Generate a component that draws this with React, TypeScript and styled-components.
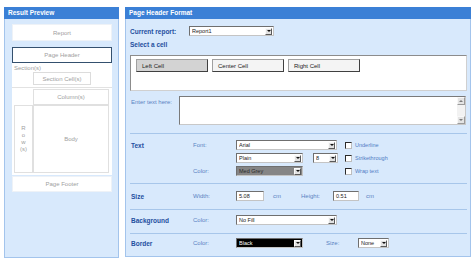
import React from 'react';
import styled, { createGlobalStyle } from 'styled-components';

const GlobalStyle = createGlobalStyle`
  html, body {
    margin: 0;
    padding: 0;
    background: #ffffff;
  }
  body {
    font-family: "Liberation Sans", Arial, sans-serif;
    font-size: 6.5px;
  }
`;

const Page = styled.div`
  display: flex;
  align-items: flex-start;
  gap: 6px;
  width: 474px;
  height: 260px;
  box-sizing: border-box;
  padding: 7px 3px 0 4px;
`;

const Panel = styled.div<{ $width: number; $height: number }>`
  display: flex;
  flex-direction: column;
  width: ${({ $width }) => $width}px;
  height: ${({ $height }) => $height}px;
  box-sizing: border-box;
  background: #d8e9fc;
  border: 1px solid #a3c4ec;
  border-top: none;
`;

const PanelHeader = styled.div`
  height: 12px;
  line-height: 12px;
  padding-left: 4px;
  background: #3b80d6;
  color: #ffffff;
  font-weight: bold;
  font-size: 6.5px;
  margin: 0 -1px;
`;

/* ---------- left: preview ---------- */

const PreviewBody = styled.div`
  display: flex;
  flex-direction: column;
  padding: 5px 6px 0 7px;
`;

const PreviewBox = styled.div<{ $height: number; $selected?: boolean }>`
  height: ${({ $height }) => $height}px;
  box-sizing: border-box;
  display: flex;
  align-items: center;
  justify-content: center;
  background: #ffffff;
  color: #a0a0a0;
  font-size: 6px;
  border: ${({ $selected }) => ($selected ? '1.5px solid #34506e' : '1px solid #eef2f7')};
`;

const Gap = styled.div<{ $h: number }>`
  height: ${({ $h }) => $h}px;
`;

const SectionArea = styled.div`
  background: #ffffff;
  display: flex;
  flex-direction: column;
  height: 112px;
`;

const SectionLabel = styled.div`
  color: #a0a0a0;
  font-size: 6px;
  padding: 2px 0 0 2px;
  height: 7px;
  line-height: 7px;
`;

const SectionCell = styled.div`
  margin-left: 21px;
  width: 58px;
  height: 14px;
  box-sizing: border-box;
  border: 1px solid #dcdcdc;
  display: flex;
  align-items: center;
  justify-content: center;
  color: #a0a0a0;
  font-size: 6px;
`;

const PreviewGrid = styled.div`
  margin-top: 2px;
  border-top: 1px solid #e2e2e2;
  padding: 1px 3px 2px 2px;
  display: grid;
  grid-template-columns: 19px 76px;
  grid-template-rows: 16px 68px;
`;

const GridCell = styled.div<{ $stack?: boolean }>`
  border: 1px solid #e0e0e0;
  display: flex;
  flex-direction: ${({ $stack }) => ($stack ? 'column' : 'row')};
  align-items: center;
  justify-content: center;
  color: #a0a0a0;
  font-size: 6px;
  line-height: 7px;
  text-align: center;
`;

const EmptyCell = styled.div``;

const FooterBox = styled(PreviewBox)`
  margin-top: 1px;
`;

/* ---------- right: format form ---------- */

const FormBody = styled.div`
  display: flex;
  flex-direction: column;
  padding: 7px 3px 0 4px;
`;

const InlineRow = styled.div`
  display: flex;
  align-items: center;
  height: 10px;
`;

const BoldLabel = styled.div<{ $width?: number }>`
  color: #1f4f9f;
  font-weight: bold;
  font-size: 6.5px;
  width: ${({ $width }) => ($width ? `${$width}px` : 'auto')};
  flex-shrink: 0;
`;

const SectionTitle = styled(BoldLabel)`
  height: 10px;
  line-height: 10px;
  margin-top: 1px;
`;

const PlainLabel = styled.div<{ $width?: number }>`
  color: #5a83c3;
  font-size: 6px;
  width: ${({ $width }) => ($width ? `${$width}px` : 'auto')};
  flex-shrink: 0;
`;

const CellLabel = styled(BoldLabel)`
  margin-top: 5px;
  height: 8px;
  line-height: 8px;
`;

const CellPicker = styled.div`
  margin-top: 6px;
  height: 36px;
  box-sizing: border-box;
  background: #ffffff;
  border: 1px solid #8c8c8c;
  border-right-color: #d0d0d0;
  border-bottom-color: #d0d0d0;
  display: flex;
  align-items: flex-start;
  gap: 4px;
  padding: 3px 0 0 5px;
`;

const CellButton = styled.div<{ $active?: boolean }>`
  width: 72px;
  height: 13px;
  box-sizing: border-box;
  display: flex;
  align-items: center;
  padding-left: 5px;
  font-size: 6px;
  color: #222222;
  background: ${({ $active }) => ($active ? '#d3d3d3' : '#f4f4f4')};
  border: 1px solid #a0a0a0;
  border-right-color: #404040;
  border-bottom-color: #404040;
`;

const TextEntryRow = styled.div`
  display: flex;
  align-items: flex-start;
  margin-top: 5px;
`;

const EntryLabel = styled(PlainLabel)`
  width: 48px;
  padding: 3px 0 0 1px;
`;

const TextArea = styled.div`
  flex: 1;
  height: 29px;
  box-sizing: border-box;
  background: #ffffff;
  border: 1px solid #7a7a7a;
  border-right-color: #c8c8c8;
  border-bottom-color: #c8c8c8;
  display: flex;
  justify-content: flex-end;
  margin-right: 1px;
`;

const ScrollBar = styled.div`
  width: 8px;
  display: flex;
  flex-direction: column;
  justify-content: space-between;
  background: #f2f2f2;
`;

const ScrollArrow = styled.div<{ $up?: boolean }>`
  width: 8px;
  height: 8px;
  box-sizing: border-box;
  background: #e4e4e4;
  border: 1px solid #f8f8f8;
  border-right-color: #9a9a9a;
  border-bottom-color: #9a9a9a;
  display: flex;
  align-items: center;
  justify-content: center;
  &::after {
    content: '';
    border-left: 2px solid transparent;
    border-right: 2px solid transparent;
    ${({ $up }) => ($up ? 'border-bottom: 2px solid #7a7a7a;' : 'border-top: 2px solid #7a7a7a;')}
  }
`;

const Section = styled.div<{ $top: number; $gap: number }>`
  border-top: 1px solid #a7c6ea;
  margin-top: ${({ $gap }) => $gap}px;
  padding: ${({ $top }) => $top}px 0 7px 1px;
  display: flex;
  align-items: flex-start;
`;

const SectionRows = styled.div`
  display: flex;
  flex-direction: column;
  gap: 3px;
`;

const FieldRow = styled.div`
  display: flex;
  align-items: center;
  height: 10px;
`;

const SelectBox = styled.div<{ $width: number; $bg?: string; $fg?: string }>`
  width: ${({ $width }) => $width}px;
  height: 10px;
  box-sizing: border-box;
  flex-shrink: 0;
  display: flex;
  align-items: center;
  padding: 0 1px 0 2px;
  background: ${({ $bg }) => $bg ?? '#ffffff'};
  color: ${({ $fg }) => $fg ?? '#1a1a1a'};
  border: 1px solid #6f6f6f;
  border-right-color: #c4c4c4;
  border-bottom-color: #c4c4c4;
  font-size: 5.5px;
`;

const SelectText = styled.span`
  flex: 1;
  white-space: nowrap;
  overflow: hidden;
`;

const DropButton = styled.div`
  width: 7px;
  height: 7px;
  box-sizing: border-box;
  background: #e2e2e2;
  border: 1px solid #fafafa;
  border-right-color: #5a5a5a;
  border-bottom-color: #5a5a5a;
  display: flex;
  align-items: center;
  justify-content: center;
  &::after {
    content: '';
    border-left: 2px solid transparent;
    border-right: 2px solid transparent;
    border-top: 2px solid #111111;
  }
`;

const TextInput = styled.div<{ $width: number }>`
  width: ${({ $width }) => $width}px;
  height: 10px;
  box-sizing: border-box;
  flex-shrink: 0;
  display: flex;
  align-items: center;
  padding-left: 2px;
  background: #ffffff;
  border: 1px solid #6f6f6f;
  border-right-color: #c4c4c4;
  border-bottom-color: #c4c4c4;
  font-size: 5.5px;
  color: #1a1a1a;
`;

const Spacer = styled.div<{ $w: number }>`
  width: ${({ $w }) => $w}px;
  flex-shrink: 0;
`;

const CheckItem = styled.div`
  display: flex;
  align-items: center;
  gap: 3px;
  color: #4f7cc4;
  font-size: 5.5px;
`;

const CheckBox = styled.div`
  width: 7px;
  height: 7px;
  box-sizing: border-box;
  background: #ffffff;
  border: 1px solid #2a2a2a;
  border-right-color: #bdbdbd;
  border-bottom-color: #bdbdbd;
`;

const Select: React.FC<{ width: number; value: string; bg?: string; fg?: string }> = ({
  width,
  value,
  bg,
  fg,
}) => (
  <SelectBox $width={width} $bg={bg} $fg={fg}>
    <SelectText>{value}</SelectText>
    <DropButton />
  </SelectBox>
);

const Check: React.FC<{ label: string }> = ({ label }) => (
  <CheckItem>
    <CheckBox />
    {label}
  </CheckItem>
);

const App: React.FC = () => {
  return (
    <>
      <GlobalStyle />
      <Page>
        <Panel $width={115} $height={251}>
          <PanelHeader>Result Preview</PanelHeader>
          <PreviewBody>
            <PreviewBox $height={17}>Report</PreviewBox>
            <Gap $h={6} />
            <PreviewBox $height={16} $selected>
              Page Header
            </PreviewBox>
            <SectionArea>
              <SectionLabel>Section(s)</SectionLabel>
              <SectionCell>Section Cell(s)</SectionCell>
              <PreviewGrid>
                <EmptyCell />
                <GridCell>Column(s)</GridCell>
                <GridCell $stack>
                  <span>R</span>
                  <span>o</span>
                  <span>w</span>
                  <span>(s)</span>
                </GridCell>
                <GridCell>Body</GridCell>
              </PreviewGrid>
            </SectionArea>
            <FooterBox $height={16}>Page Footer</FooterBox>
          </PreviewBody>
        </Panel>

        <Panel $width={346} $height={250}>
          <PanelHeader>Page Header Format</PanelHeader>
          <FormBody>
            <InlineRow>
              <BoldLabel $width={59}>Current report:</BoldLabel>
              <Select width={85} value="Report1" />
            </InlineRow>
            <CellLabel>Select a cell</CellLabel>
            <CellPicker>
              <CellButton $active>Left Cell</CellButton>
              <CellButton>Center Cell</CellButton>
              <CellButton>Right Cell</CellButton>
            </CellPicker>

            <TextEntryRow>
              <EntryLabel>Enter text here:</EntryLabel>
              <TextArea>
                <ScrollBar>
                  <ScrollArrow $up />
                  <ScrollArrow />
                </ScrollBar>
              </TextArea>
            </TextEntryRow>

            <Section $gap={8} $top={6}>
              <SectionTitle $width={62}>Text</SectionTitle>
              <SectionRows>
                <FieldRow>
                  <PlainLabel $width={43}>Font:</PlainLabel>
                  <Select width={101} value="Arial" />
                  <Spacer $w={8} />
                  <Check label="Underline" />
                </FieldRow>
                <FieldRow>
                  <Spacer $w={43} />
                  <Select width={67} value="Plain" />
                  <Spacer $w={10} />
                  <Select width={25} value="8" />
                  <Spacer $w={7} />
                  <Check label="Strikethrough" />
                </FieldRow>
                <FieldRow>
                  <PlainLabel $width={43}>Color:</PlainLabel>
                  <Select width={67} value="Med Grey" bg="#858585" fg="#2a2a2a" />
                  <Spacer $w={42} />
                  <Check label="Wrap text" />
                </FieldRow>
              </SectionRows>
            </Section>

            <Section $gap={0} $top={7}>
              <SectionTitle $width={62}>Size</SectionTitle>
              <FieldRow>
                <PlainLabel $width={43}>Width:</PlainLabel>
                <TextInput $width={28}>5.08</TextInput>
                <Spacer $w={9} />
                <PlainLabel $width={28}>cm</PlainLabel>
                <PlainLabel $width={32}>Height:</PlainLabel>
                <TextInput $width={26}>0.51</TextInput>
                <Spacer $w={7} />
                <PlainLabel>cm</PlainLabel>
              </FieldRow>
            </Section>

            <Section $gap={0} $top={5}>
              <SectionTitle $width={62}>Background</SectionTitle>
              <FieldRow>
                <PlainLabel $width={43}>Color:</PlainLabel>
                <Select width={101} value="No Fill" />
              </FieldRow>
            </Section>

            <Section $gap={0} $top={4}>
              <SectionTitle $width={62}>Border</SectionTitle>
              <FieldRow>
                <PlainLabel $width={43}>Color:</PlainLabel>
                <Select width={67} value="Black" bg="#000000" fg="#ffffff" />
                <Spacer $w={23} />
                <PlainLabel $width={32}>Size:</PlainLabel>
                <Select width={31} value="None" />
              </FieldRow>
            </Section>
          </FormBody>
        </Panel>
      </Page>
    </>
  );
};

export default App;
